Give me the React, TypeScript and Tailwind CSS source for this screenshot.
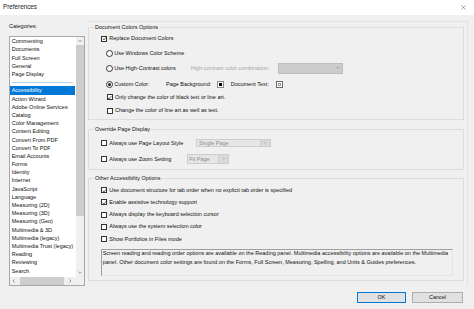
import React from "react";

const topCats = ["Commenting", "Documents", "Full Screen", "General", "Page Display"];
const bottomCats = [
  "Accessibility",
  "Action Wizard",
  "Adobe Online Services",
  "Catalog",
  "Color Management",
  "Content Editing",
  "Convert From PDF",
  "Convert To PDF",
  "Email Accounts",
  "Forms",
  "Identity",
  "Internet",
  "JavaScript",
  "Language",
  "Measuring (2D)",
  "Measuring (3D)",
  "Measuring (Geo)",
  "Multimedia & 3D",
  "Multimedia (legacy)",
  "Multimedia Trust (legacy)",
  "Reading",
  "Reviewing",
  "Search",
];

function Check({ checked }: { checked?: boolean }) {
  return (
    <span className="w-[6px] h-[6px] shrink-0 border border-[#333333] bg-white flex items-center justify-center">
      {checked && (
        <svg width="5" height="5" viewBox="0 0 10 10" className="overflow-visible">
          <path d="M1.2 5.2 L3.9 8 L9 1.8" fill="none" stroke="#222222" strokeWidth="1.4" />
        </svg>
      )}
    </span>
  );
}

function Radio({ checked }: { checked?: boolean }) {
  return (
    <span className="w-[7px] h-[7px] shrink-0 rounded-full border border-[#333333] bg-white flex items-center justify-center">
      {checked && <span className="w-[3px] h-[3px] rounded-full bg-[#1a1a1a]" />}
    </span>
  );
}

function Chev({ dir, color }: { dir: "up" | "down" | "left" | "right"; color: string }) {
  const d =
    dir === "down"
      ? "M0.8 1.5 L4 4.7 L7.2 1.5"
      : dir === "up"
      ? "M0.8 5.5 L4 2.3 L7.2 5.5"
      : dir === "left"
      ? "M5.2 0.8 L2 4 L5.2 7.2"
      : "M2.8 0.8 L6 4 L2.8 7.2";
  return (
    <svg width="4" height="4" viewBox="0 0 8 8">
      <path d={d} fill="none" stroke={color} strokeWidth="1.2" />
    </svg>
  );
}

export default function App() {
  return (
    <div className="w-[474px] h-[309px] bg-[#f0f0f0] flex flex-col overflow-hidden text-[5.5px] leading-[7px] text-[#111111] font-['Liberation_Sans',Arial,sans-serif]">
      {/* Title bar */}
      <div className="h-[15px] shrink-0 bg-white flex items-start justify-between pl-[3px] pr-[8px] pt-[3px]">
        <span className="text-[6.3px] leading-[7px] text-[#222222]">Preferences</span>
        <svg width="5" height="5" viewBox="0 0 10 10" className="mt-[1.5px]">
          <path d="M1 1 L9 9 M9 1 L1 9" stroke="#444444" strokeWidth="1" />
        </svg>
      </div>

      {/* Main */}
      <div className="h-[271px] shrink-0 flex pt-[6px]">
        {/* Categories */}
        <div className="w-[88px] pl-[9px] flex flex-col">
          <div className="mt-[2px] h-[7px]">Categories:</div>
          <div className="mt-[6.3px] w-[76px] h-[249.4px] border border-[#a8a8a8] bg-white flex flex-col">
            <div className="flex flex-1 min-h-0">
              <div className="flex-1 flex flex-col overflow-hidden">
                {topCats.map((c) => (
                  <div key={c} className="h-[8.2px] leading-[8.2px] pl-[1.7px] whitespace-nowrap">
                    {c}
                  </div>
                ))}
                <div className="h-[8.2px] flex items-center pl-[2px] pr-[3px]">
                  <div className="h-px w-full bg-[#b9d1ea]" />
                </div>
                {bottomCats.map((c, i) => (
                  <div
                    key={c}
                    className={
                      i === 0
                        ? "h-[8.2px] leading-[8.2px] pl-[1.7px] mr-[1px] whitespace-nowrap bg-[#0078d7] text-white"
                        : "h-[8.2px] leading-[8.2px] pl-[1.7px] whitespace-nowrap"
                    }
                  >
                    {c}
                  </div>
                ))}
              </div>
              <div className="w-[8px] flex flex-col bg-[#f0f0f0]">
                <div className="h-[8px] flex items-center justify-center">
                  <Chev dir="up" color="#606060" />
                </div>
                <div className="h-[171px] bg-[#cdcdcd]" />
                <div className="flex-1" />
                <div className="h-[8px] flex items-center justify-center">
                  <Chev dir="down" color="#606060" />
                </div>
              </div>
            </div>
            <div className="h-[8px] flex bg-[#f0f0f0]">
              <div className="w-[8px] flex items-center justify-center">
                <Chev dir="left" color="#606060" />
              </div>
              <div className="flex-1 flex items-stretch">
                <div className="ml-[2px] w-[44px] bg-[#cdcdcd]" />
              </div>
              <div className="w-[8px] flex items-center justify-start">
                <Chev dir="right" color="#606060" />
              </div>
              <div className="w-[8px]" />
            </div>
          </div>
        </div>

        {/* Options panel */}
        <div className="w-[380px] h-[265px] border-t border-r border-[#e3e3e3] flex flex-col">
          {/* Group 1 */}
          <div className="mt-[5px] mr-[3px] h-[93px] border border-[#dcdcdc] flex flex-col">
            <div className="-mt-[4px] ml-[5px] px-[1px] w-fit h-[7px] bg-[#f0f0f0]">Document Colors Options</div>
            <div className="mt-[3.7px] h-[8px] flex items-center pl-[12px]">
              <Check checked />
              <span className="ml-[2.3px]">Replace Document Colors</span>
            </div>
            <div className="mt-[6.6px] h-[8px] flex items-center pl-[16.7px]">
              <Radio />
              <span className="ml-[1.6px]">Use Windows Color Scheme</span>
            </div>
            <div className="mt-[5.7px] h-[11px] flex items-center pl-[16.7px]">
              <Radio />
              <span className="ml-[1.6px] w-[76.4px]">Use High-Contrast colors</span>
              <span className="w-[87.6px] text-[#a8a8a8]">High-contrast color combination:</span>
              <div className="w-[65px] h-[11px] bg-[#cccccc] border border-[#bdbdbd] flex items-center justify-end pr-[2px]">
                <Chev dir="down" color="#8a8a8a" />
              </div>
            </div>
            <div className="mt-[6.3px] h-[8px] flex items-center pl-[16.7px]">
              <Radio checked />
              <span className="ml-[1.6px] w-[51.7px]">Custom Color:</span>
              <span className="w-[50.7px]">Page Background:</span>
              <span className="w-[7px] h-[7px] border border-[#8a8a8a] bg-white p-[1px] flex">
                <span className="flex-1 bg-black" />
              </span>
              <span className="ml-[7px] w-[45.3px]">Document Text:</span>
              <span className="w-[7px] h-[7px] border border-[#6a6a6a] bg-white p-[1px] flex">
                <span className="flex-1 border border-[#9a9a9a] bg-white" />
              </span>
            </div>
            <div className="mt-[5.2px] h-[8px] flex items-center pl-[17.7px]">
              <Check checked />
              <span className="ml-[2.3px]">Only change the color of black text or line art.</span>
            </div>
            <div className="mt-[5.2px] h-[8px] flex items-center pl-[17.7px]">
              <Check />
              <span className="ml-[2.3px]">Change the color of line art as well as text.</span>
            </div>
          </div>

          {/* Group 2 */}
          <div className="mt-[9px] mr-[3px] h-[41px] border border-[#dcdcdc] flex flex-col">
            <div className="-mt-[4px] ml-[5px] px-[1px] w-fit h-[7px] bg-[#f0f0f0]">Override Page Display</div>
            <div className="mt-[5px] h-[10px] flex items-center pl-[12px]">
              <Check />
              <span className="ml-[2.3px] w-[86.7px]">Always use Page Layout Style</span>
              <div className="w-[74.7px] h-[8.5px] flex border border-[#cdcdcd] bg-[#e6e6e6]">
                <span className="flex-1 pl-[2px] leading-[6.5px] text-[#8c8c8c]">Single Page</span>
                <span className="w-[10px] border-l border-[#cdcdcd] bg-[#dadada] flex items-center justify-center">
                  <Chev dir="down" color="#a0a0a0" />
                </span>
              </div>
            </div>
            <div className="mt-[6.3px] h-[10px] flex items-center pl-[12px]">
              <Check />
              <span className="ml-[2.3px] w-[77.4px]">Always use Zoom Setting</span>
              <div className="w-[42.6px] h-[10px] flex border border-[#cdcdcd] bg-[#e6e6e6]">
                <span className="flex-1 pl-[1.5px] leading-[8px] text-[#8c8c8c]">Fit Page</span>
                <span className="w-[10px] border-l border-[#cdcdcd] bg-[#dadada] flex items-center justify-center">
                  <Chev dir="down" color="#a0a0a0" />
                </span>
              </div>
            </div>
          </div>

          {/* Group 3 */}
          <div className="mt-[8px] mr-[3px] h-[103px] border border-[#dcdcdc] flex flex-col">
            <div className="-mt-[4px] ml-[5px] px-[1px] w-fit h-[7px] bg-[#f0f0f0]">Other Accessibility Options</div>
            <div className="mt-[4.3px] h-[8px] flex items-center pl-[12px]">
              <Check checked />
              <span className="ml-[2.3px] whitespace-nowrap">
                Use document structure for tab order when no explicit tab order is specified
              </span>
            </div>
            <div className="mt-[4.2px] h-[8px] flex items-center pl-[12px]">
              <Check checked />
              <span className="ml-[2.3px]">Enable assistive technology support</span>
            </div>
            <div className="mt-[4.2px] h-[8px] flex items-center pl-[12px]">
              <Check />
              <span className="ml-[2.3px]">Always display the keyboard selection cursor</span>
            </div>
            <div className="mt-[4.2px] h-[8px] flex items-center pl-[12px]">
              <Check />
              <span className="ml-[2.3px]">Always use the system selection color</span>
            </div>
            <div className="mt-[4.2px] h-[8px] flex items-center pl-[12px]">
              <Check />
              <span className="ml-[2.3px]">Show Portfolios in Files mode</span>
            </div>
            <div className="mt-[6.2px] ml-[12px] w-[351.7px] h-[26.7px] border border-t-[#9f9f9f] border-l-[#9f9f9f] border-r-[#e6e6e6] border-b-[#e6e6e6] pl-[0.7px] leading-[8.4px] whitespace-nowrap">
              <div className="-mt-[1px]">
                Screen reading and reading order options are available on the Reading panel. Multimedia accessibility options are available on the Multimedia
              </div>
              <div>
                panel. Other document color settings are found on the Forms, Full Screen, Measuring, Spelling, and Units &amp; Guides preferences.
              </div>
            </div>
          </div>
        </div>
      </div>

      {/* Buttons */}
      <div className="mt-[6px] h-[11px] flex justify-end gap-[6.6px] pr-[11.3px]">
        <div className="w-[48.4px] h-[11px] border border-[#0078d7] bg-[#e1e1e1] flex items-center justify-center">OK</div>
        <div className="w-[50.4px] h-[11px] border border-[#adadad] bg-[#e1e1e1] flex items-center justify-center">Cancel</div>
      </div>
    </div>
  );
}
